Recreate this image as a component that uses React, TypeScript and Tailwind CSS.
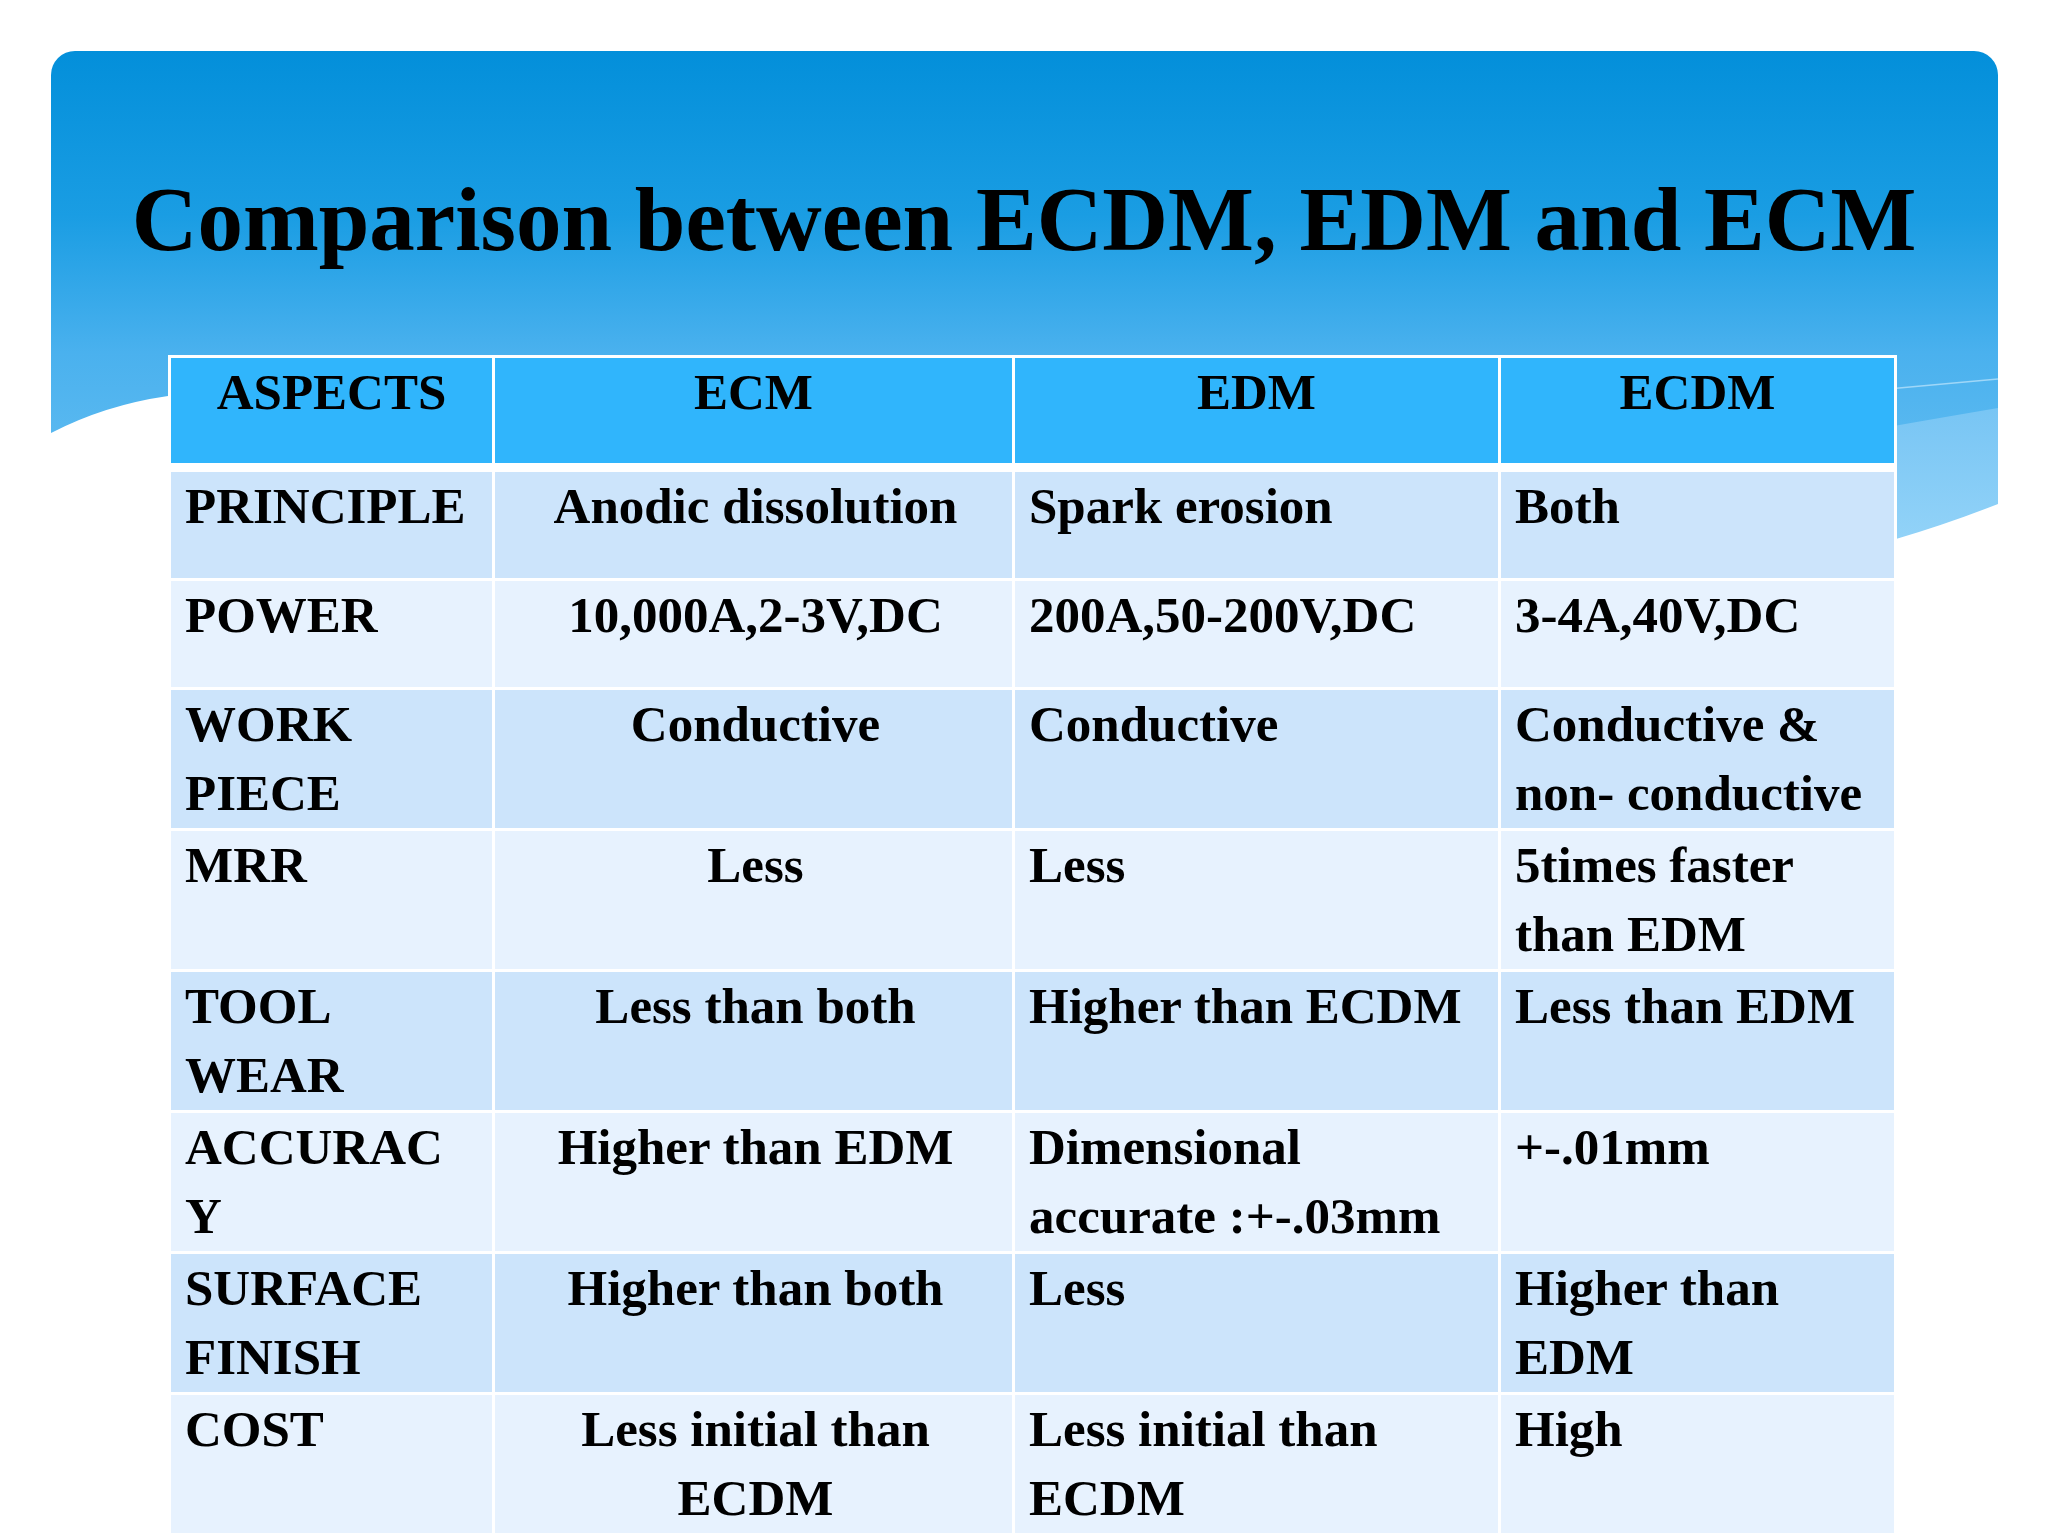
import React from "react";

type Row = {
  a: string[];
  b: string[];
  c: string[];
  d: string[];
  dark: boolean;
};

const rows: Row[] = [
  { a: ["PRINCIPLE"], b: ["Anodic dissolution"], c: ["Spark erosion"], d: ["Both"], dark: true },
  { a: ["POWER"], b: ["10,000A,2-3V,DC"], c: ["200A,50-200V,DC"], d: ["3-4A,40V,DC"], dark: false },
  { a: ["WORK", "PIECE"], b: ["Conductive"], c: ["Conductive"], d: ["Conductive &", "non- conductive"], dark: true },
  { a: ["MRR"], b: ["Less"], c: ["Less"], d: ["5times faster", "than EDM"], dark: false },
  { a: ["TOOL", "WEAR"], b: ["Less than both"], c: ["Higher than ECDM"], d: ["Less than EDM"], dark: true },
  { a: ["ACCURAC", "Y"], b: ["Higher than EDM"], c: ["Dimensional", "accurate :+-.03mm"], d: ["+-.01mm"], dark: false },
  { a: ["SURFACE", "FINISH"], b: ["Higher than both"], c: ["Less"], d: ["Higher than", "EDM"], dark: true },
  { a: ["COST"], b: ["Less initial than", "ECDM"], c: ["Less initial than", "ECDM"], d: ["High"], dark: false },
];

function Lines({ lines }: { lines: string[] }) {
  return (
    <>
      {lines.map((l, i) => (
        <React.Fragment key={i}>
          {i > 0 && <br />}
          {l}
        </React.Fragment>
      ))}
    </>
  );
}

function Background() {
  return (
    <svg
      className="absolute left-0 top-0"
      width="2048"
      height="1536"
      viewBox="0 0 2048 1536"
      aria-hidden="true"
    >
      <defs>
        <linearGradient id="panel" x1="0" y1="51" x2="0" y2="600" gradientUnits="userSpaceOnUse">
          <stop offset="0" stopColor="#038fda" />
          <stop offset="0.3" stopColor="#1a9de3" />
          <stop offset="0.55" stopColor="#4ab1ee" />
          <stop offset="0.7" stopColor="#58b8f0" />
          <stop offset="1" stopColor="#66bff2" />
        </linearGradient>
        <linearGradient id="band" x1="0" y1="408" x2="0" y2="545" gradientUnits="userSpaceOnUse">
          <stop offset="0" stopColor="#78c5f4" />
          <stop offset="1" stopColor="#93d3f8" />
        </linearGradient>
      </defs>
      <path d="M51 620 V75 A24 24 0 0 1 75 51 H1974 A24 24 0 0 1 1998 75 V620 Z" fill="url(#panel)" />
      <path d="M1888 427 Q1945 417 1998 408 V620 H1888 Z" fill="url(#band)" />
      <path d="M1888 389 L1998 379" stroke="#9fd7f8" strokeWidth="1.5" fill="none" />
      <path
        d="M40 437 L51 433 Q105 405 168 396 L1896 539 Q1947 524 1998 504 L2010 500 V720 H40 Z"
        fill="#ffffff"
      />
    </svg>
  );
}

export default function App() {
  const cellBase =
    "pl-[14px] pr-[10px] min-h-[106px] text-[51px] leading-[69px] font-bold text-black";
  return (
    <div className="relative w-[2048px] h-[1536px] overflow-hidden bg-white font-['Liberation_Serif','Times_New_Roman',serif]">
      <Background />
      <div className="relative flex flex-col">
        <h1 className="mt-[174px] text-center text-[91px] leading-none font-bold text-black">
          Comparison between ECDM, EDM and ECM
        </h1>
        <div className="mt-[90px] ml-[168px] w-[1729px] bg-white p-[3px] grid grid-cols-[321px_517px_483px_393px] gap-[3px]">
          {["ASPECTS", "ECM", "EDM", "ECDM"].map((h) => (
            <div
              key={h}
              className="h-[111px] border-b-[6px] border-white bg-[#30b5fc] text-center text-[51px] leading-[69px] font-bold text-black"
            >
              {h}
            </div>
          ))}
          {rows.map((r, i) => {
            const bg = r.dark ? "bg-[#cce4fb]" : "bg-[#e7f2fe]";
            return (
              <React.Fragment key={i}>
                <div className={`${cellBase} ${bg}`}>
                  <Lines lines={r.a} />
                </div>
                <div className={`${cellBase} ${bg} text-center pl-[4px] pr-[4px]`}>
                  <Lines lines={r.b} />
                </div>
                <div className={`${cellBase} ${bg}`}>
                  <Lines lines={r.c} />
                </div>
                <div className={`${cellBase} ${bg}`}>
                  <Lines lines={r.d} />
                </div>
              </React.Fragment>
            );
          })}
        </div>
      </div>
    </div>
  );
}
